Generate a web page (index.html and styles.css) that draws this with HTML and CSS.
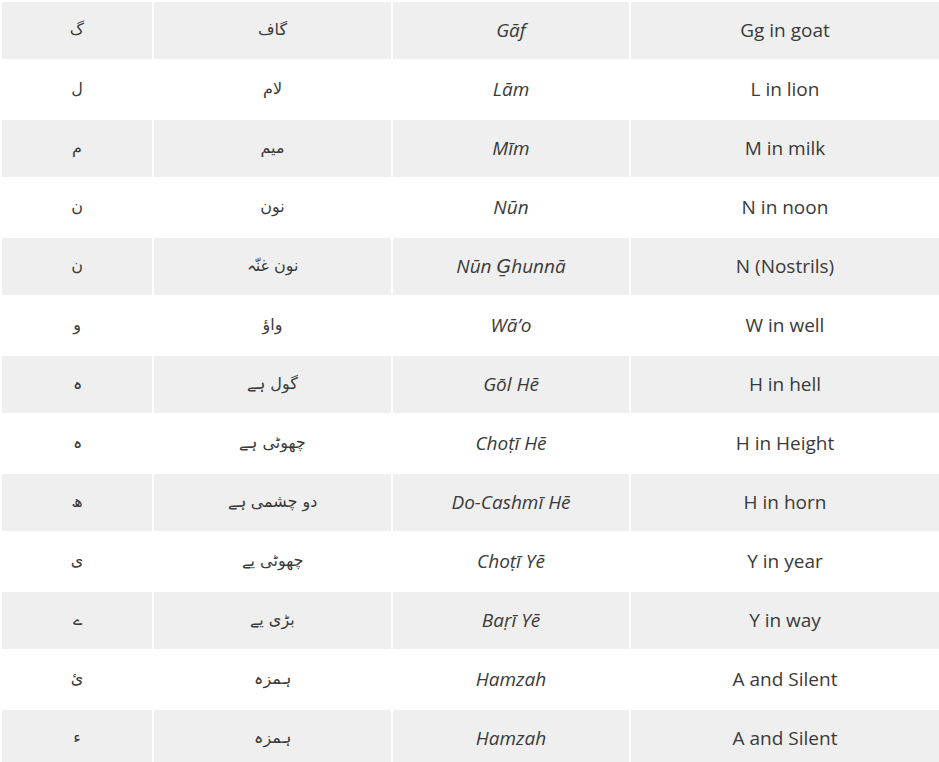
FILE: index.html
```html
<!DOCTYPE html>
<html lang="en">
<head>
<meta charset="utf-8">
<title>Urdu Alphabet</title>
<link rel="stylesheet" href="styles.css">
</head>
<body>
<table class="alpha">
  <colgroup>
    <col class="c1"><col class="c2"><col class="c3"><col class="c4">
  </colgroup>
  <tbody>
    <tr><td class="ur">گ</td><td class="ur">گاف</td><td class="tr">Gāf</td><td class="en">Gg in goat</td></tr>
    <tr><td class="ur">ل</td><td class="ur">لام</td><td class="tr">Lām</td><td class="en">L in lion</td></tr>
    <tr><td class="ur">م</td><td class="ur">میم</td><td class="tr">Mīm</td><td class="en">M in milk</td></tr>
    <tr><td class="ur">ن</td><td class="ur">نون</td><td class="tr">Nūn</td><td class="en">N in noon</td></tr>
    <tr><td class="ur">ن</td><td class="ur">نون غنّہ</td><td class="tr">Nūn G̱hunnā</td><td class="en">N (Nostrils)</td></tr>
    <tr><td class="ur">و</td><td class="ur">واؤ</td><td class="tr">Wā’o</td><td class="en">W in well</td></tr>
    <tr><td class="ur">ہ</td><td class="ur">گول ہے</td><td class="tr">Gōl Hē</td><td class="en">H in hell</td></tr>
    <tr><td class="ur">ہ</td><td class="ur">چھوٹی ہے</td><td class="tr">Choṭī Hē</td><td class="en">H in Height</td></tr>
    <tr><td class="ur">ھ</td><td class="ur">دو چشمی ہے</td><td class="tr">Do-Cashmī Hē</td><td class="en">H in horn</td></tr>
    <tr><td class="ur">ی</td><td class="ur">چھوٹی یے</td><td class="tr">Choṭī Yē</td><td class="en">Y in year</td></tr>
    <tr><td class="ur">ے</td><td class="ur">بڑی یے</td><td class="tr">Baṛī Yē</td><td class="en">Y in way</td></tr>
    <tr><td class="ur">ئ</td><td class="ur">ہمزہ</td><td class="tr">Hamzah</td><td class="en">A and Silent</td></tr>
    <tr><td class="ur">ء</td><td class="ur">ہمزہ</td><td class="tr">Hamzah</td><td class="en">A and Silent</td></tr>
  </tbody>
</table>
</body>
</html>
```
FILE: styles.css
```css
html, body {
  margin: 0;
  padding: 0;
  background: #ffffff;
}

body {
  font-family: "Open Sans", "DejaVu Sans", sans-serif;
  color: #3a3a3a;
}

.alpha {
  border-collapse: separate;
  border-spacing: 2px;
  width: 940px;
  table-layout: fixed;
}

.c1 { width: 150px; }
.c2 { width: 237px; }
.c3 { width: 236px; }
.c4 { width: 308px; }

.alpha td {
  height: 57px;
  padding: 0 8px 2px;
  text-align: center;
  vertical-align: middle;
  box-sizing: border-box;
}

.alpha tr:nth-child(odd) td {
  background: #efefef;
}

.ur {
  font-family: "DejaVu Sans", sans-serif;
  font-size: 16px;
  direction: rtl;
}

.tr {
  font-size: 19px;
  font-style: italic;
}

.en {
  font-size: 19px;
}
```
